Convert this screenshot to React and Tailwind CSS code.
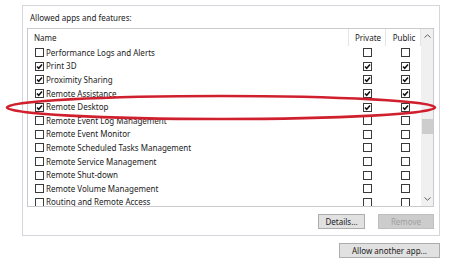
const ROWS = [
  { name: 'Performance Logs and Alerts', on: false, priv: false, pub: false },
  { name: 'Print 3D', on: true, priv: true, pub: true },
  { name: 'Proximity Sharing', on: true, priv: true, pub: true },
  { name: 'Remote Assistance', on: true, priv: true, pub: true },
  { name: 'Remote Desktop', on: true, priv: true, pub: true },
  { name: 'Remote Event Log Management', on: false, priv: false, pub: false },
  { name: 'Remote Event Monitor', on: false, priv: false, pub: false },
  { name: 'Remote Scheduled Tasks Management', on: false, priv: false, pub: false },
  { name: 'Remote Service Management', on: false, priv: false, pub: false },
  { name: 'Remote Shut-down', on: false, priv: false, pub: false },
  { name: 'Remote Volume Management', on: false, priv: false, pub: false },
  { name: 'Routing and Remote Access', on: false, priv: false, pub: false },
]

function Check({ checked }) {
  return (
    <svg width="9" height="9" viewBox="0 0 9 9" className="shrink-0">
      <rect x="0.5" y="0.5" width="8" height="8" fill="#fff" stroke="#3a3a3a" />
      {checked && <path d="M2 4.5 L3.7 6.3 L7 2.4" fill="none" stroke="#111" strokeWidth="1.5" />}
    </svg>
  )
}

export default function App() {
  return (
    <div className="relative w-[474px] h-[268px] bg-white overflow-hidden text-[#222] text-[8px] leading-none" style={{ fontFamily: '"Noto Sans", "Liberation Sans", sans-serif' }}>
      <div className="pt-[5px] pl-[22px] flex flex-col items-start">
        {/* group box */}
        <div className="w-[418px] h-[231px] border border-[#d5d5dc] flex flex-col pl-[4px]">
          <div className="h-[22px] pl-[3px] flex items-center pt-[1px]">Allowed apps and features:</div>
          <div className="w-[407px] h-[179px] border border-[#c9c9ce] flex overflow-hidden">
            <div className="flex-1 flex flex-col">
              <div className="h-[17px] shrink-0 flex items-center">
                <div className="w-[320px] pl-[6px]">Name</div>
                <div className="w-[37px] h-full border-l border-[#e5e5e5] flex items-center justify-center pl-[2px]">Private</div>
                <div className="w-[36px] h-full border-l border-[#e5e5e5] border-r flex items-center justify-center pl-[2px]">Public</div>
              </div>
              {ROWS.map((r) => (
                <div key={r.name} className="h-[13.6px] shrink-0 flex items-center">
                  <div className="w-[320px] pl-[7px] flex items-center gap-[2px]">
                    <Check checked={r.on} />
                    <span className="whitespace-nowrap">{r.name}</span>
                  </div>
                  <div className="w-[37px] flex justify-center pl-[2px]"><Check checked={r.priv} /></div>
                  <div className="w-[36px] flex justify-center pl-[4px]"><Check checked={r.pub} /></div>
                </div>
              ))}
            </div>
            {/* scrollbar */}
            <div className="w-[12px] bg-[#f0f0f0] flex flex-col items-center text-[#606060]">
              <div className="h-[14px] flex items-center justify-center">
                <svg width="7" height="4" viewBox="0 0 7 4"><path d="M0.5 3.5 L3.5 0.8 L6.5 3.5" fill="none" stroke="#606060" /></svg>
              </div>
              <div className="h-[76px]" />
              <div className="w-[11px] h-[15px] bg-[#cdcdcd]" />
              <div className="flex-1" />
              <div className="h-[14px] flex items-center justify-center">
                <svg width="7" height="4" viewBox="0 0 7 4"><path d="M0.5 0.5 L3.5 3.2 L6.5 0.5" fill="none" stroke="#606060" /></svg>
              </div>
            </div>
          </div>
          <div className="w-[407px] flex justify-end gap-[13px] mt-[7px]">
            <div className="w-[47px] h-[15px] bg-[#e1e1e1] border border-[#adadad] flex items-center justify-center">Details...</div>
            <div className="w-[56px] h-[15px] bg-[#cccccc] border border-[#bfbfbf] text-[#a0a0a0] flex items-center justify-center">Remove</div>
          </div>
        </div>
        <div className="w-[418px] flex justify-end mt-[7px]">
          <div className="w-[101px] h-[15px] bg-[#e1e1e1] border border-[#adadad] flex items-center justify-center">Allow another app...</div>
        </div>
      </div>
      {/* red annotation ellipse */}
      <svg className="absolute left-0 top-0 pointer-events-none" width="474" height="268">
        <ellipse cx="221" cy="107.5" rx="214" ry="11.5" fill="none" stroke="#d0202e" strokeWidth="2.6" />
      </svg>
    </div>
  )
}
